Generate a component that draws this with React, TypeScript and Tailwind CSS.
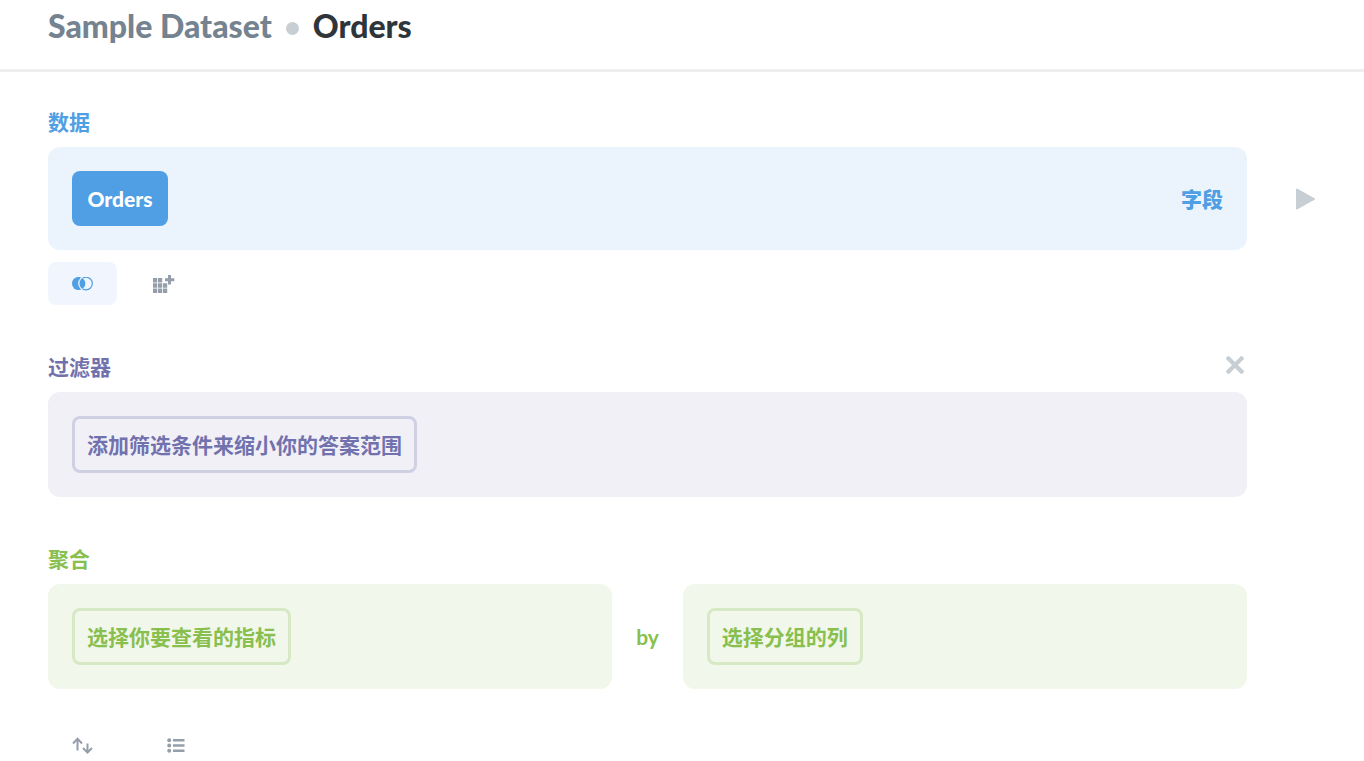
import type { ReactNode } from 'react';
import clsx from 'clsx';

function JoinIcon() {
  return (
    <svg width="21" height="14" viewBox="0 0 21 14" aria-hidden="true">
      <circle cx="6.6" cy="6.5" r="6.6" fill="#509ee3" />
      <circle cx="14" cy="6.5" r="6.4" fill="none" stroke="#f1f6fe" strokeWidth="2.8" />
      <circle cx="14" cy="6.5" r="6.3" fill="none" stroke="#509ee3" strokeWidth="1.2" />
      <path d="M10.4 0.8a6.6 6.600 0 0 1 0 11.400a6.600 6.600 0 0 1 0-11.400z" fill="#509ee3" stroke="#f1f6fe" strokeWidth="0.8" />
    </svg>
  );
}

function CustomColumnIcon() {
  return (
    <svg width="22" height="18" viewBox="0 0 22 18" fill="#949fa9" aria-hidden="true">
      <path d="M0 3h4.200v4.400H0zM5 3h4.200v4.400H5zM0 8.300h4.200v4.400H0zM5 8.300h4.200v4.400H5zM10 8.300h4.200v4.400H10zM0 13.600h4.200v4.400H0zM5 13.600h4.200v4.400H5zM10 13.600h4.200v4.400H10z" />
      <path d="M15 0h3v3.200h3.300v3H18v3.200h-3V6.200h-3v-3h3z" />
    </svg>
  );
}

function SortIcon() {
  return (
    <svg width="21" height="17" viewBox="0 0 21 17" fill="none" stroke="#949fa9" strokeWidth="2" aria-hidden="true">
      <path d="M5.500 13.500V2M1 6.500L5.500 1.800L10 6.500M15.500 6.500V15M11 11L15.500 15.500L20 11" />
    </svg>
  );
}

function ListIcon() {
  return (
    <svg width="18" height="15" viewBox="0 0 18 15" fill="#949fa9" aria-hidden="true">
      <circle cx="2.200" cy="2.200" r="2" />
      <circle cx="2.200" cy="7.500" r="2" />
      <circle cx="2.200" cy="12.800" r="2" />
      <path d="M6 1h11.500v2.400H6zM6 6.300h11.500v2.400H6zM6 11.600h11.500v2.400H6z" />
    </svg>
  );
}

type StepProps = {
  title: string;
  color: string;
  children: ReactNode;
  action?: ReactNode;
  side?: ReactNode;
};

function Step({ title, color, children, action, side }: StepProps) {
  return (
    <section className="grid grid-cols-[1fr_69px]">
      <div className="flex h-[37px] items-start justify-between">
        <h2 className={clsx('text-[21px] leading-6', color)}>{title}</h2>
        {action}
      </div>
      <div className="col-start-1">{children}</div>
      {side}
    </section>
  );
}

const outlined = 'h-[57px] rounded-lg border-3 px-3';
const green = 'flex-1 rounded-xl bg-[#f2f7ec] p-6 text-[#88bf4d]';

export default function App() {
  return (
    <div className="bg-white font-['Lato','Noto_Sans_CJK_SC',sans-serif] text-[21px] leading-8 font-bold">
      <header className="border-b-3 border-[#eeeeef] px-12 pt-1 pb-[21px]">
        <h1 className="flex h-11 items-center text-[32px] leading-11 font-black">
          <a href="#dataset" className="text-[#74838f]">Sample Dataset</a>
          <span className="mx-[14px] mt-1 size-[13px] rounded-full bg-[#c7cfd4]" />
          <span className="text-[#2e353b]">Orders</span>
        </h1>
      </header>

      <main className="px-12 pt-[38px]">
        <Step
          title="数据"
          color="text-[#509ee3]"
          side={
            <button aria-label="预览" className="flex items-center justify-end">
              <svg width="20" height="22" viewBox="0 0 20 22" aria-hidden="true">
                <path d="M1 1.500L18 11L1 20.500z" fill="#c7cfd4" stroke="#c7cfd4" strokeWidth="2" strokeLinejoin="round" />
              </svg>
            </button>
          }
        >
          <div className="flex items-center justify-between rounded-xl bg-[#ebf4fc] p-6 text-[#509ee3]">
            <button className="h-[55px] min-w-24 rounded-lg bg-[#509ee3] px-3 font-black text-white">Orders</button>
            <button className="font-black">字段</button>
          </div>
        </Step>

        <div className="mt-3 flex gap-3">
          <button aria-label="关联数据" className="flex h-[43px] items-center rounded-lg bg-[#f1f6fe] px-6">
            <JoinIcon />
          </button>
          <button aria-label="自定义列" className="flex h-[43px] items-center px-6">
            <CustomColumnIcon />
          </button>
        </div>

        <div className="mt-[50px]">
          <Step
            title="过滤器"
            color="text-[#7172ad]"
            action={
              <button aria-label="移除" className="flex h-5 items-center pr-[3px]">
                <svg width="18" height="18" viewBox="0 0 18 18" aria-hidden="true">
                  <path d="M2.500 2.500L15.500 15.500M15.500 2.500L2.500 15.500" stroke="#c7cfd4" strokeWidth="4.200" strokeLinecap="square" />
                </svg>
              </button>
            }
          >
            <div className="flex rounded-xl bg-[#f1f0f7] p-6 text-[#7172ad]">
              <button className={clsx(outlined, 'border-[#d0d0e4]')}>添加筛选条件来缩小你的答案范围</button>
            </div>
          </Step>
        </div>

        <div className="mt-[50px]">
          <Step title="聚合" color="text-[#88bf4d]">
            <div className="flex items-center">
              <div className={green}>
                <button className={clsx(outlined, 'block border-[#d7e9c4]')}>选择你要查看的指标</button>
              </div>
              <span className="px-6 text-[#88bf4d]">by</span>
              <div className={green}>
                <button className={clsx(outlined, 'block border-[#d7e9c4]')}>选择分组的列</button>
              </div>
            </div>
          </Step>
        </div>

        <div className="mt-10 flex gap-[26px]">
          <button aria-label="排序" className="flex h-8 items-center px-6">
            <SortIcon />
          </button>
          <button aria-label="行数限制" className="flex h-8 items-center px-6">
            <ListIcon />
          </button>
        </div>
      </main>
    </div>
  );
}
